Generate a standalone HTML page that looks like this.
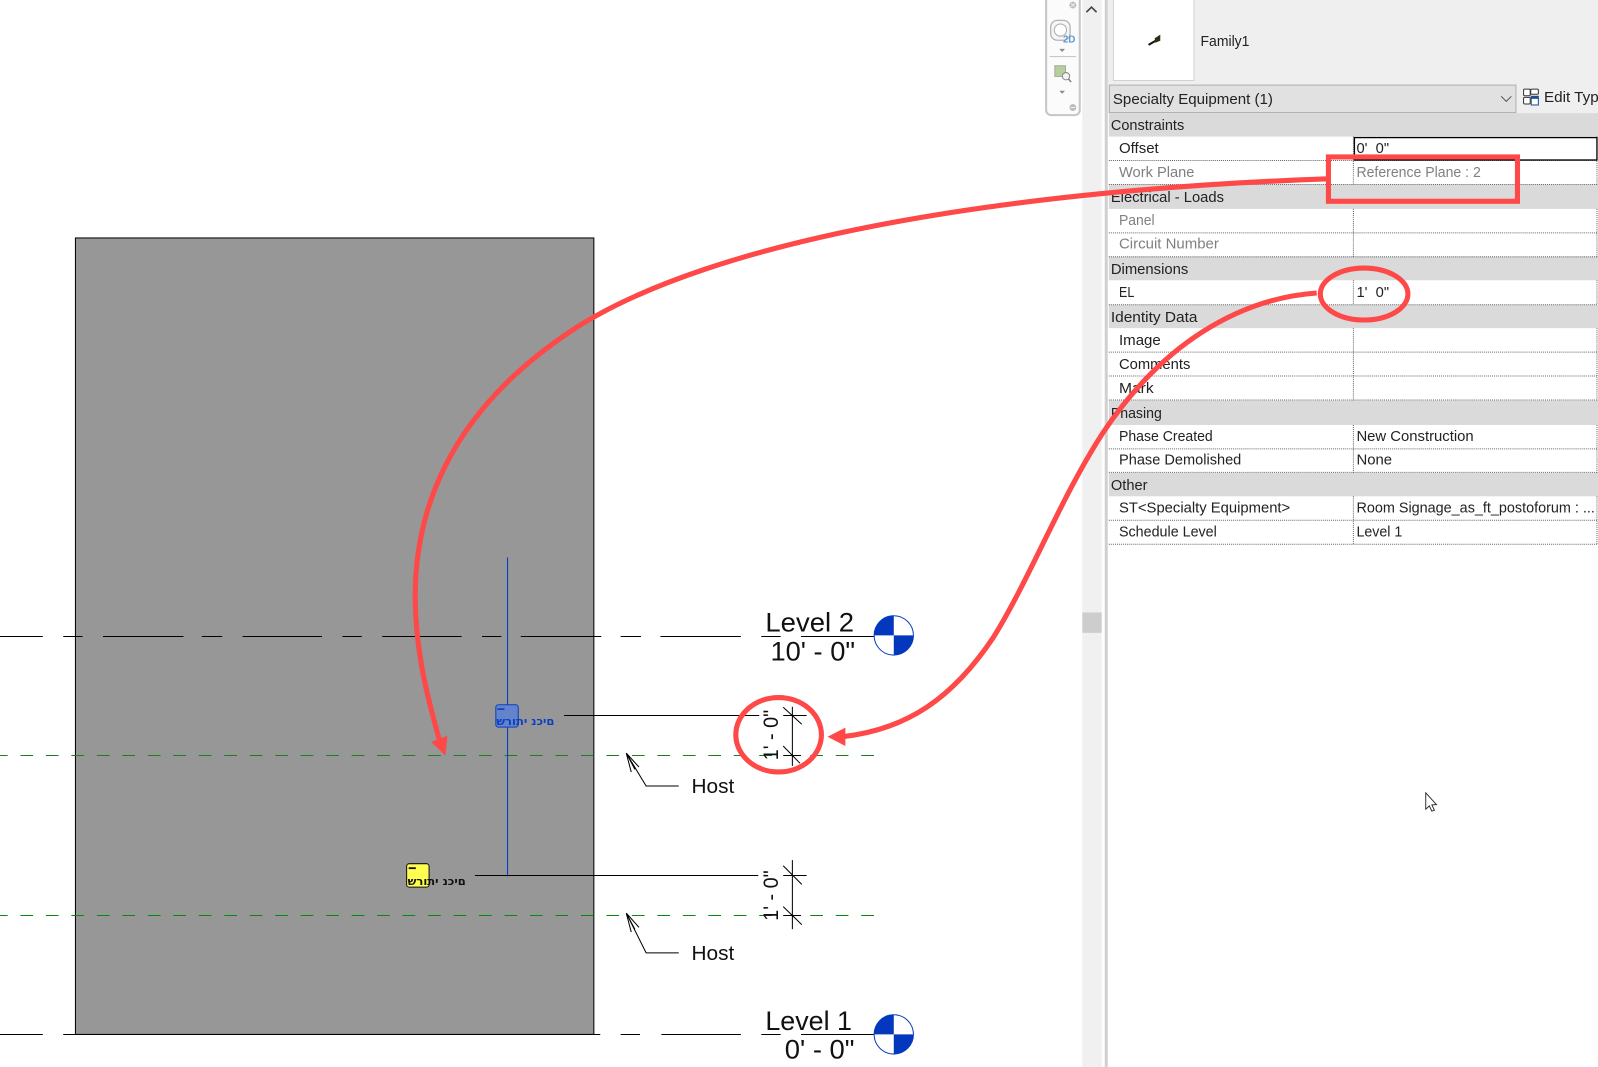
<!DOCTYPE html>
<html><head><meta charset="utf-8"><title>Room Signage</title>
<style>
html,body{margin:0;padding:0;background:#fff;width:1598px;height:1067px;overflow:hidden}
svg{display:block;position:absolute;left:0;top:0}
.p text{font:14.3px "Liberation Sans",sans-serif;fill:#222}
.p text.g{fill:#808080}
.cad{font-family:"Liberation Sans",sans-serif;fill:#111}
.heb{font-family:"DejaVu Sans","Liberation Sans",sans-serif;font-weight:bold;font-size:11px;direction:ltr;unicode-bidi:bidi-override}
</style></head><body>
<svg width="1598" height="1067" viewBox="0 0 1568 1047" xmlns="http://www.w3.org/2000/svg">
<rect width="1568" height="1047" fill="#fff"/>

<!-- grey wall -->
<rect x="74" y="233.5" width="508.7" height="781.5" fill="#979797" stroke="#000" stroke-width="1"/>

<!-- level lines -->
<g stroke="#000" stroke-width="1" fill="none">
<path d="M0 624.6H42M62 624.6H81M101 624.6H180M198 624.6H218M238 624.6H316M336 624.6H355M375 624.6H453M473 624.6H492M511 624.6H590M609 624.6H629M648 624.6H727M747 624.6H766M786 624.6H858"/>
<path d="M0 1015.1H42M62 1015.1H589M609 1015.1H628M649 1015.1H727M747 1015.1H766M786 1015.1H858"/>
</g>
<!-- green reference planes -->
<path d="M-5 741.35H858" stroke="#1f8a1f" stroke-width="1.05" stroke-dasharray="12.5 12.5" fill="none" style="stroke:#1b7f1b"/>
<path d="M-5 898.35H858" stroke="#088a08" stroke-width="1" stroke-dasharray="12.5 12.5" fill="none"/>

<!-- blue vertical -->
<path d="M498 547V860" stroke="#0d3fc0" stroke-width="1.1"/>

<!-- blue tag -->
<rect x="486.5" y="691.5" width="22" height="22" rx="2.5" fill="#6383cc" stroke="#0c3fc0" stroke-width="1"/>
<rect x="488" y="695" width="7" height="1.6" fill="#0c3fc0"/>
<text class="heb" x="487" y="711.5" text-anchor="start" textLength="57" lengthAdjust="spacingAndGlyphs" style="fill:#0c3fc0">שרותי נכים</text>

<!-- yellow tag -->
<rect x="399" y="847.5" width="22" height="23" rx="2.5" fill="#ffff4f" stroke="#111" stroke-width="1"/>
<rect x="401" y="851" width="7" height="1.8" fill="#111"/>
<text class="heb" x="400" y="868.5" text-anchor="start" textLength="57" lengthAdjust="spacingAndGlyphs" style="fill:#111">שרותי נכים</text>

<!-- leaders and dims -->
<g stroke="#000" stroke-width="1" fill="none">
<path d="M553.5 702.1H745"/>
<path d="M466 859.1H744"/>
<path d="M777.5 693.5V751.5M768.5 702.1H791.5M768.5 694L786.7 710.7M768.5 741.35H786M768.5 732L785 749"/>
<path d="M777.5 844V911.7M768.5 859.1H791.5M768.5 849.5L786.7 867.8M768.5 898.35H786M768.5 889.6L786.7 907.3"/>
<path d="M614.5 739L634 771.3H666M614.5 739L627 752.7M614.5 739L619.4 757.6M614.5 739L623 755"/>
<path d="M614.5 896L634 935H666M614.5 896L627 910M614.5 896L619.4 914.7M614.5 896L623 912"/>
</g>

<!-- dim text -->
<text class="cad" font-size="21" transform="translate(763.5 746) rotate(-90)" textLength="49.5" lengthAdjust="spacingAndGlyphs">1' - 0"</text>
<text class="cad" font-size="21" transform="translate(763.5 903.5) rotate(-90)" textLength="49.5" lengthAdjust="spacingAndGlyphs">1' - 0"</text>

<text class="cad" x="678.5" y="778" font-size="19.5" fill="#222" textLength="42" lengthAdjust="spacingAndGlyphs">Host</text>
<text class="cad" x="678.5" y="942" font-size="19.5" fill="#222" textLength="42" lengthAdjust="spacingAndGlyphs">Host</text>

<text class="cad" x="751" y="619.5" font-size="26.5" textLength="87" lengthAdjust="spacingAndGlyphs">Level 2</text>
<text class="cad" x="756" y="648" font-size="26" textLength="83" lengthAdjust="spacingAndGlyphs">10' - 0"</text>
<text class="cad" x="751" y="1010.5" font-size="26.5" textLength="85" lengthAdjust="spacingAndGlyphs">Level 1</text>
<text class="cad" x="770" y="1038.5" font-size="26" textLength="68.5" lengthAdjust="spacingAndGlyphs">0' - 0"</text>

<!-- level heads -->
<g>
<circle cx="877" cy="623.5" r="19.3" fill="#fff" stroke="#0a3fc0" stroke-width="1"/>
<path d="M877 623.5V604.2A19.3 19.3 0 0 0 857.7 623.5ZM877 623.5V642.8A19.3 19.3 0 0 0 896.3 623.5Z" fill="#0338be"/>
<circle cx="877" cy="1015" r="19.3" fill="#fff" stroke="#0a3fc0" stroke-width="1"/>
<path d="M877 1015V995.7A19.3 19.3 0 0 0 857.7 1015ZM877 1015V1034.3A19.3 19.3 0 0 0 896.3 1015Z" fill="#0338be"/>
</g>

<!-- nav bar -->
<rect x="1026.5" y="-6" width="33" height="119" rx="5" fill="#fbfbfb" stroke="#c6c6c6" stroke-width="2"/>
<circle cx="1052.7" cy="5" r="3.4" fill="#bdbdbd"/>
<path d="M1050.7 3L1054.7 7M1054.7 3L1050.7 7" stroke="#f0f0f0" stroke-width=".8"/>
<circle cx="1052.7" cy="105.5" r="3.4" fill="#bdbdbd"/>
<path d="M1050.5 105.5H1055" stroke="#f0f0f0" stroke-width="1"/>
<rect x="1031" y="20" width="19" height="19.5" rx="6.5" fill="#f6f6f6" stroke="#b4b4b4" stroke-width="1.3"/>
<circle cx="1040.5" cy="29.5" r="6" fill="#fff" stroke="#aaa" stroke-width="1"/>
<text x="1043" y="41.5" font-family="Liberation Sans,sans-serif" font-size="9.5" font-weight="bold" fill="#5a9ad0">2D</text>
<path d="M1039.5 48H1045L1042.2 51Z" fill="#888"/>
<path d="M1030 55.5H1056" stroke="#c8c8c8" stroke-width="1"/>
<rect x="1035" y="64.5" width="10.5" height="10.5" fill="#b4cf9c" stroke="#9a9a9a" stroke-width=".8"/>
<circle cx="1046" cy="74.8" r="3.6" fill="#f4f4f4" stroke="#888" stroke-width="1"/>
<path d="M1048.5 77.5L1051 80.5" stroke="#777" stroke-width="1.4"/>
<path d="M1039.5 89H1045L1042.2 92Z" fill="#888"/>

<!-- scroll strip -->
<rect x="1062" y="0" width="19" height="1047" fill="#f0f0f0"/>
<path d="M1066 12L1071 7L1076 12" fill="none" stroke="#444" stroke-width="1.6"/>
<rect x="1062" y="601" width="19" height="20" fill="#cdcdcd"/>
<rect x="1084" y="0" width="3" height="1047" fill="#d0d0d0"/>

<!-- properties panel -->
<rect x="1087" y="0" width="481" height="111" fill="#efefef"/>
<rect x="1092.5" y="-2" width="79" height="81" fill="#fff" stroke="#d2d2d2"/>
<path d="M1127 44L1134 40" stroke="#111" stroke-width="2"/>
<path d="M1133 37.5L1138.5 34L1138.5 40L1133.5 42Z" fill="#2e2e12"/>
<rect x="1088.5" y="83.5" width="399" height="27" fill="#e1e1e1" stroke="#adadad"/>
<path d="M1473 94.5L1478 99.5L1483 94.5" fill="none" stroke="#555" stroke-width="1"/>
<g fill="#fff" stroke="#333" stroke-width="1">
<rect x="1495" y="87.5" width="6.5" height="6.5" rx="1"/><rect x="1495" y="95.5" width="6.5" height="6.5" rx="1"/><rect x="1502" y="87.5" width="7.5" height="5" rx="1"/>
</g>
<rect x="1502.5" y="94.5" width="7" height="8.5" fill="#fff" stroke="#1d4f91"/>
<rect x="1502.5" y="94.5" width="7" height="2.5" fill="#1d4f91"/>

<g fill="#dadada">
<rect x="1088" y="111" width="480" height="23"/>
<rect x="1088" y="181" width="480" height="24"/>
<rect x="1088" y="252" width="480" height="23"/>
<rect x="1088" y="299" width="480" height="23"/>
<rect x="1088" y="393" width="480" height="24"/>
<rect x="1088" y="464" width="480" height="23"/>
</g>
<g stroke="#666" stroke-width="1" stroke-dasharray="1 1" fill="none">
<path d="M1088 157.5H1568M1088 181H1568M1088 228.5H1568M1088 252H1568M1088 299H1568M1088 345.5H1568M1088 369H1568M1088 392.5H1568M1088 440.5H1568M1088 463.5H1568M1088 510.5H1568M1088 534H1568"/>
<path d="M1328 134V181M1328 205V252M1328 275V299M1328 322V393M1328 417V464M1328 487V534"/>
<path d="M1567 134V181M1567 205V252M1567 275V299M1567 322V393M1567 417V464M1567 487V534"/>
</g>
<rect x="1329" y="135" width="238" height="22" fill="#fff" stroke="#000" stroke-width="1.3"/>

<g class="p">
<text x="1178" y="45" textLength="48" lengthAdjust="spacingAndGlyphs" fill="#333">Family1</text>
<text x="1092" y="102" textLength="157" lengthAdjust="spacingAndGlyphs">Specialty Equipment (1)</text>
<text x="1515" y="100" textLength="62" lengthAdjust="spacingAndGlyphs">Edit Type</text>
<text x="1090" y="127.5" textLength="72" lengthAdjust="spacingAndGlyphs">Constraints</text>
<text x="1098" y="150" textLength="39" lengthAdjust="spacingAndGlyphs">Offset</text>
<text x="1331" y="150" textLength="32" lengthAdjust="spacingAndGlyphs">0'&#160;&#160;0"</text>
<text class="g" x="1098" y="173.5" textLength="74" lengthAdjust="spacingAndGlyphs">Work Plane</text>
<text class="g" x="1331" y="173.5" textLength="122" lengthAdjust="spacingAndGlyphs">Reference Plane : 2</text>
<text x="1090" y="198" textLength="111" lengthAdjust="spacingAndGlyphs">Electrical - Loads</text>
<text class="g" x="1098" y="221" textLength="35" lengthAdjust="spacingAndGlyphs">Panel</text>
<text class="g" x="1098" y="244" textLength="98" lengthAdjust="spacingAndGlyphs">Circuit Number</text>
<text x="1090" y="269" textLength="76" lengthAdjust="spacingAndGlyphs">Dimensions</text>
<text x="1098" y="291.5" textLength="15" lengthAdjust="spacingAndGlyphs">EL</text>
<text x="1331" y="291.5" textLength="32" lengthAdjust="spacingAndGlyphs">1'&#160;&#160;0"</text>
<text x="1090" y="316" textLength="85" lengthAdjust="spacingAndGlyphs">Identity Data</text>
<text x="1098" y="338.5" textLength="41" lengthAdjust="spacingAndGlyphs">Image</text>
<text x="1098" y="362" textLength="70" lengthAdjust="spacingAndGlyphs">Comments</text>
<text x="1098" y="385.5" textLength="34" lengthAdjust="spacingAndGlyphs">Mark</text>
<text x="1090" y="410" textLength="50" lengthAdjust="spacingAndGlyphs">Phasing</text>
<text x="1098" y="432.5" textLength="92" lengthAdjust="spacingAndGlyphs">Phase Created</text>
<text x="1331" y="432.5" textLength="115" lengthAdjust="spacingAndGlyphs">New Construction</text>
<text x="1098" y="456" textLength="120" lengthAdjust="spacingAndGlyphs">Phase Demolished</text>
<text x="1331" y="456" textLength="35" lengthAdjust="spacingAndGlyphs">None</text>
<text x="1090" y="481" textLength="36" lengthAdjust="spacingAndGlyphs">Other</text>
<text x="1098" y="503" textLength="168" lengthAdjust="spacingAndGlyphs">ST&lt;Specialty Equipment&gt;</text>
<text x="1331" y="503" textLength="234" lengthAdjust="spacingAndGlyphs">Room Signage_as_ft_postoforum : ...</text>
<text x="1098" y="526.5" textLength="96" lengthAdjust="spacingAndGlyphs">Schedule Level</text>
<text x="1331" y="526.5" textLength="45" lengthAdjust="spacingAndGlyphs">Level 1</text>
</g>

<!-- cursor -->
<path d="M1399 778V794L1402.5 790.8L1405 796L1407.5 795L1405 789.8L1409.5 789.5Z" fill="#fff" stroke="#222" stroke-width=".9"/>

<!-- red annotations -->
<g fill="none" stroke="#ff4848" stroke-width="5">
<rect x="1303.5" y="154" width="185.5" height="43.5"/>
<path d="M1303 175.5C1000 186 700 232 560 325C440 405 402 505 408 605C411 655 422 692 431 726"/>
<ellipse cx="1338.5" cy="288.5" rx="43" ry="25.5"/>
<path d="M1292 287.5C1215 293 1140 338 1082 425C1040 490 1012 565 975 625C935 685 890 716 826 723"/>
<ellipse cx="764" cy="721" rx="42" ry="36.5"/>
</g>
<path d="M437 741.5L423 728L439 722Z" fill="#ff4848"/>
<path d="M812 723L829.5 714V732Z" fill="#ff4848"/>
</svg>
</body></html>
